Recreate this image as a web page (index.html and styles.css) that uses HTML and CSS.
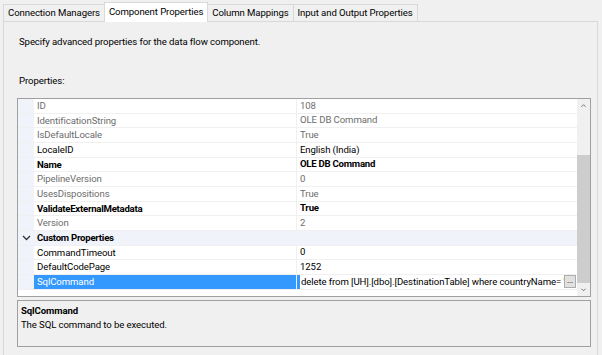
FILE: index.html
```html
<!DOCTYPE html>
<html lang="en">
<head>
    <meta charset="UTF-8">
    <title>Component Properties</title>
    <link rel="stylesheet" href="styles.css">
</head>
<body>

    <div class="tabs">
        <div class="tab">Connection Managers</div>
        <div class="tab active">Component Properties</div>
        <div class="tab">Column Mappings</div>
        <div class="tab">Input and Output Properties</div>
    </div>

    <div class="panel">
        <p class="intro">Specify advanced properties for the data flow component.</p>
        <p class="caption">Properties:</p>

        <div class="grid">
            <div class="rows">
                <div class="row ro"><span class="gutter"></span><span class="name">ID</span><span class="value">108</span></div>
                <div class="row ro"><span class="gutter"></span><span class="name">IdentificationString</span><span class="value">OLE DB Command</span></div>
                <div class="row ro"><span class="gutter"></span><span class="name">IsDefaultLocale</span><span class="value">True</span></div>
                <div class="row"><span class="gutter"></span><span class="name">LocaleID</span><span class="value">English (India)</span></div>
                <div class="row bold"><span class="gutter"></span><span class="name">Name</span><span class="value">OLE DB Command</span></div>
                <div class="row ro"><span class="gutter"></span><span class="name">PipelineVersion</span><span class="value">0</span></div>
                <div class="row ro"><span class="gutter"></span><span class="name">UsesDispositions</span><span class="value">True</span></div>
                <div class="row bold"><span class="gutter"></span><span class="name">ValidateExternalMetadata</span><span class="value">True</span></div>
                <div class="row ro"><span class="gutter"></span><span class="name">Version</span><span class="value">2</span></div>
                <div class="row category">
                    <span class="gutter">
                        <svg width="9" height="6" viewBox="0 0 9 6"><path d="M1 1 L4.5 4.5 L8 1" fill="none" stroke="#333" stroke-width="1.3"/></svg>
                    </span>
                    <span class="name">Custom Properties</span><span class="value"></span>
                </div>
                <div class="row"><span class="gutter"></span><span class="name">CommandTimeout</span><span class="value">0</span></div>
                <div class="row"><span class="gutter"></span><span class="name">DefaultCodePage</span><span class="value">1252</span></div>
                <div class="row selected">
                    <span class="gutter"></span><span class="name">SqlCommand</span>
                    <span class="value"><span class="text">delete from [UH].[dbo].[DestinationTable] where countryName= '</span><span class="ellipsis">...</span></span>
                </div>
            </div>
            <div class="scrollbar">
                <svg class="arrow" width="7" height="5" viewBox="0 0 7 5"><path d="M0.5 4 L3.5 1 L6.5 4" fill="none" stroke="#606060" stroke-width="1.2"/></svg>
                <div class="track"><div class="thumb"></div></div>
                <svg class="arrow" width="7" height="5" viewBox="0 0 7 5"><path d="M0.5 1 L3.5 4 L6.5 1" fill="none" stroke="#606060" stroke-width="1.2"/></svg>
            </div>
        </div>

        <div class="description">
            <div class="desc-title">SqlCommand</div>
            <div>The SQL command to be executed.</div>
        </div>
    </div>

</body>
</html>
```

FILE: styles.css
```css
*, *::before, *::after {
    box-sizing: border-box;
}

body {
    margin: 0;
    padding: 0;
    background-color: #f0f0f0;
    font-family: Roboto, "Noto Sans", sans-serif;
    font-size: 9.6px;
    letter-spacing: -0.1px;
    color: #000;
    overflow: hidden;
}

.tabs {
    display: flex;
    align-items: flex-end;
    height: 21px;
    padding-left: 3px;
    position: relative;
    z-index: 1;
}

.tab {
    height: 17px;
    padding: 0 4px;
    line-height: 16px;
    border: 1px solid #d9d9d9;
    border-bottom: none;
    margin-right: -1px;
    white-space: nowrap;
}

.tab.active {
    height: 20px;
    background-color: white;
    margin-bottom: -1px;
    padding-top: 1px;
}

.panel {
    margin-left: 3px;
    width: 595px;
    height: 340px;
    border: 1px solid #d9d9d9;
    padding: 12px 0 0 13px;
}

.intro {
    margin: 0;
    line-height: 16px;
    padding-left: 2px;
}

.caption {
    margin: 23px 0 0;
    line-height: 16px;
    padding-left: 2px;
}

.grid {
    display: flex;
    width: 574px;
    height: 199px;
    margin-top: 9px;
    border: 1px solid #a0a0a0;
    background-color: white;
}

.rows {
    flex: 1;
    min-width: 0;
}

.row {
    display: grid;
    grid-template-columns: 16px 263px 1fr;
    height: 14.67px;
    line-height: 14px;
    border-bottom: 1px solid #f0f0f0;
}

.gutter {
    background-color: #f0f3fa;
    display: flex;
    align-items: center;
    justify-content: center;
}

.name {
    padding-left: 3px;
    white-space: nowrap;
    overflow: hidden;
    border-right: 1px solid #f0f0f0;
}

.value {
    padding-left: 3px;
    white-space: nowrap;
    overflow: hidden;
    display: flex;
    align-items: center;
}

.row.ro {
    color: #6d6d6d;
}

.row.bold {
    font-weight: bold;
    letter-spacing: -0.25px;
}

.row.category {
    background-color: #f0f3fa;
    font-weight: bold;
    letter-spacing: -0.25px;
}

.row.category .name {
    border-right: none;
}

.row.selected .name {
    background-color: #3399ff;
    color: white;
}

.row.selected .value {
    border-left: 3px solid #3399ff;
    padding-left: 1px;
}

.row.selected .text {
    flex: 1;
    min-width: 0;
    overflow: hidden;
}

.ellipsis {
    flex: none;
    width: 12px;
    height: 13px;
    margin-right: 1px;
    border: 1px solid #adadad;
    background-color: #e1e1e1;
    font-size: 8px;
    line-height: 9px;
    text-align: center;
}

.scrollbar {
    width: 13px;
    background-color: #f0f0f0;
    display: flex;
    flex-direction: column;
    align-items: center;
}

.arrow {
    margin: 5px 0;
}

.track {
    flex: 1;
    width: 100%;
    padding: 42px 0 0;
}

.thumb {
    height: 128px;
    background-color: #cdcdcd;
}

.description {
    width: 574px;
    height: 47px;
    margin-top: 3px;
    border: 1px solid #a0a0a0;
    padding: 3px 3px;
    line-height: 14px;
}

.desc-title {
    font-weight: bold;
}
```
